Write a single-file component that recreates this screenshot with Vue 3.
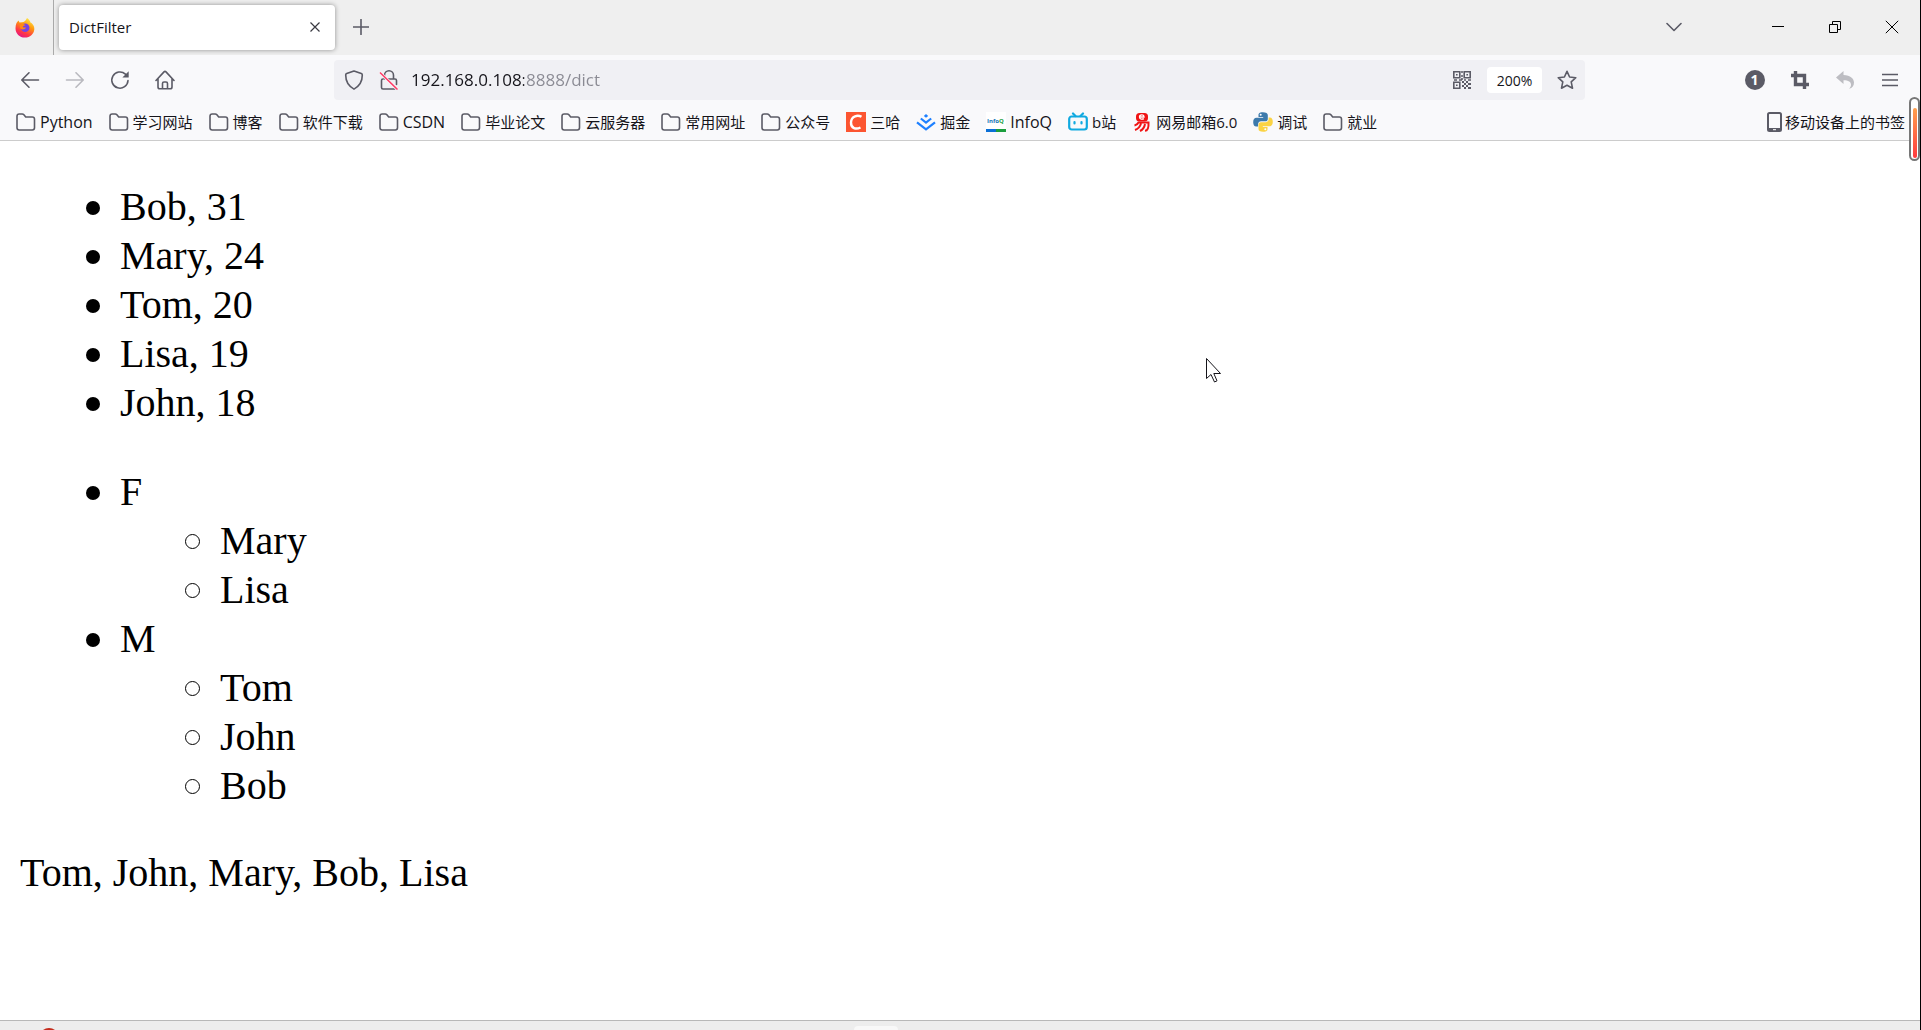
<script setup>
import { ref } from 'vue'

const address = ref('192.168.0.108:8888/dict')

const bookmarks = [
  { label: 'Python', icon: 'folder', latin: true },
  { label: '学习网站', icon: 'folder' },
  { label: '博客', icon: 'folder' },
  { label: '软件下载', icon: 'folder' },
  { label: 'CSDN', icon: 'folder', latin: true },
  { label: '毕业论文', icon: 'folder' },
  { label: '云服务器', icon: 'folder' },
  { label: '常用网址', icon: 'folder' },
  { label: '公众号', icon: 'folder' },
  { label: '三哈', icon: 'sanha' },
  { label: '掘金', icon: 'juejin' },
  { label: 'InfoQ', icon: 'infoq', latin: true },
  { label: 'b站', icon: 'bili' },
  { label: '网易邮箱6.0', icon: 'netease' },
  { label: '调试', icon: 'python' },
  { label: '就业', icon: 'folder' },
]

const people = ['Bob, 31', 'Mary, 24', 'Tom, 20', 'Lisa, 19', 'John, 18']
const groups = [
  { name: 'F', members: ['Mary', 'Lisa'] },
  { name: 'M', members: ['Tom', 'John', 'Bob'] },
]
</script>

<template>
  <div class="window">
    <header class="tabbar">
      <div class="brand">
        <svg width="20" height="20" viewBox="0 0 20 20">
          <defs>
            <linearGradient id="fox" x1="0.8" y1="0" x2="0.3" y2="1">
              <stop offset="0" stop-color="#fff44f" />
              <stop offset="0.4" stop-color="#ff980e" />
              <stop offset="0.75" stop-color="#ff3647" />
              <stop offset="1" stop-color="#e31587" />
            </linearGradient>
          </defs>
          <path d="M1.5 5 3.4 2.6 4.6 4.6 7 4.2C9 4 10.6 3 12 0c2 1.300 3.200 3 3.400 4.400 1 .3 1.800 1 2.200 1.800C19 8 19.500 9.500 19.300 11.500 18.800 16 15 19.600 10 19.600 4.500 19.600.5 15.500.5 10.200.5 8.200.8 6.500 1.500 5z" fill="url(#fox)" />
          <circle cx="10.200" cy="9.800" r="4.300" fill="#7542e5" />
          <path d="M5 6.500c2-1 4-.8 5.500.8-1 .2-2.300.7-2.800 1.600 1 .8 2 .8 3.300.4-.6 2-3 2.800-5 1.800C5 10 4.500 8 5 6.500z" fill="#ff8a16" />
        </svg>
      </div>
      <div class="tab">
        <span class="tab-title">DictFilter</span>
        <button class="tab-close" aria-label="Close tab">
          <svg width="10" height="10" viewBox="0 0 10 10"><path d="M.5.5l9 9M9.500.5l-9 9" class="dark" /></svg>
        </button>
      </div>
      <button class="new-tab" aria-label="New tab">
        <svg width="16" height="16" viewBox="0 0 16 16"><path d="M8 .5v15M.5 8h15" class="line" /></svg>
      </button>
      <div class="grow"></div>
      <button class="list-tabs" aria-label="List all tabs">
        <svg width="16" height="10" viewBox="0 0 16 10"><path d="M1 1.500l7 7 7-7" class="line" /></svg>
      </button>
      <button class="win-btn" aria-label="Minimize">
        <svg width="12" height="12" viewBox="0 0 12 12"><path d="M0 5.500h12" class="black" /></svg>
      </button>
      <button class="win-btn" aria-label="Restore">
        <svg width="12" height="12" viewBox="0 0 12 12"><path d="M.5 3.500h8v8h-8zM3.500 3.500v-3h8v8h-3" class="black" /></svg>
      </button>
      <button class="win-btn" aria-label="Close">
        <svg width="14" height="14" viewBox="0 0 14 14"><path d="M.8.8l12.400 12.400M13.200.8L.8 13.200" class="black" /></svg>
      </button>
    </header>

    <nav class="toolbar">
      <button class="tool" aria-label="Back">
        <svg width="20" height="20" viewBox="0 0 20 20"><path d="M18.500 10H2M9 2.800L1.800 10 9 17.200" class="line" /></svg>
      </button>
      <button class="tool faded" aria-label="Forward">
        <svg width="20" height="20" viewBox="0 0 20 20"><path d="M1.500 10H18M11 2.800L18.200 10 11 17.200" class="line" /></svg>
      </button>
      <button class="tool" aria-label="Reload">
        <svg width="20" height="20" viewBox="0 0 20 20">
          <path d="M18 10.500A8.100 8.100 0 1 1 15.400 4.100L17 5.600" class="line" />
          <path d="M18.700 1.200v6.300h-6.300z" fill="#5b5b66" />
        </svg>
      </button>
      <button class="tool" aria-label="Home">
        <svg width="20" height="20" viewBox="0 0 20 20"><path d="M1 10.500L9 1.900q1-1 2 0l8 8.600M3 8.800V17q0 1.800 1.800 1.800h10.400Q17 18.800 17 17V8.800M7.500 18.800V13.500q0-1.500 1.500-1.500h2q1.500 0 1.500 1.500v5.300" class="line" /></svg>
      </button>
      <div class="spacer"></div>
      <div class="urlbar">
        <svg width="20" height="20" viewBox="0 0 20 20"><path d="M10 1l7.300 2.600q1 .4 1 1.500C18.300 12 15 16.500 10 19.100 5 16.500 1.700 12 1.700 5.100q0-1.100 1-1.500z" class="line" /></svg>
        <svg class="lock" width="20" height="20" viewBox="0 0 20 20">
          <path d="M5.500 9V5.300a4.500 4.500 0 0 1 9 0V9M9.500 9H16q1.500 0 1.500 1.500v4M4 9q-1.500 0-1.500 1.500v7Q2.500 19 4 19h12" class="line" />
          <path d="M1 2.500L18.500 19.500" stroke="#f9f9fb" stroke-width="3" />
          <path d="M1 2.500L18.500 19.500" stroke="#ff3b67" stroke-width="1.600" />
        </svg>
        <input v-model="address" class="address" aria-label="Address" spellcheck="false" />
        <svg class="qr" width="18" height="18" viewBox="0 0 18 18" fill="none" stroke="#5b5b66" stroke-width="1.600">
          <path d="M.8.8h6v6h-6zM11.200.8h6v6h-6zM.8 11.200h6v6h-6z" />
          <path d="M3 3.800h1.600M13.400 3.800H15M3 14.200h1.600M8 1h2M8 5h2M9 7v2M1 9h3M6 9h3M11 9h2M15 9h3" />
          <path d="M9 11h2M13 11h2M11 13h2M15 13h3M9 15h2M13 15h2M11 17h2M15 17h3" stroke-width="2" />
        </svg>
        <button class="zoom">200%</button>
        <button class="star" aria-label="Bookmark this page">
          <svg width="20" height="20" viewBox="0 0 20 20"><path d="M10 1.300l2.600 5.700 6.200.7-4.600 4.200 1.300 6.300L10 15.300l-5.500 2.900 1.300-6.300L1.200 7.700 7.400 7z" class="line" /></svg>
        </button>
      </div>
      <div class="spacer"></div>
      <button class="tool" aria-label="Account"><span class="count">1</span></button>
      <button class="tool" aria-label="Screenshot">
        <svg width="18" height="18" viewBox="0 0 18 18"><path d="M4.500 0v13.500H18M0 4.500h13.500V18" fill="none" stroke="#5b5b66" stroke-width="3.400" /></svg>
      </button>
      <button class="tool" aria-label="Undo">
        <svg width="18" height="18" viewBox="0 0 18 18"><path d="M0 6.500L7.500 0v4C14.500 4 18 8 18 11.500c0 3-1.500 5.500-5 6.300 1.500-1.300 2-2.500 2-4 0-2.800-2.500-4.500-7.500-4.500V13z" fill="#bdbdc2" /></svg>
      </button>
      <button class="tool" aria-label="Menu">
        <svg width="16" height="14" viewBox="0 0 16 14"><path d="M0 1.500h16M0 7h16M0 12.500h16" class="line" /></svg>
      </button>
    </nav>

    <div class="bookmarks">
      <a v-for="b in bookmarks" :key="b.label" href="#" class="bookmark" :class="{ latin: b.latin }">
        <svg v-if="b.icon === 'folder'" width="20" height="20" viewBox="0 0 20 20"><path d="M1 15.800V4.200Q1 2 3.200 2h3q1 0 1.700.8L9.700 5h6.600q2.200 0 2.200 2.200v8.600q0 2.200-2.200 2.200H3.200Q1 18 1 15.800z" class="line" /></svg>
        <svg v-else-if="b.icon === 'sanha'" width="20" height="20" viewBox="0 0 20 20">
          <rect width="20" height="20" fill="#fc5531" />
          <path d="M15.500 4.800C12 2.800 5.300 3.500 5 10.500c-.2 6 5 7.200 9.500 5" fill="none" stroke="#fff" stroke-width="2.400" />
        </svg>
        <svg v-else-if="b.icon === 'juejin'" width="20" height="20" viewBox="0 0 20 20">
          <path d="M10 2l2.200 1.900L10 5.700 7.800 3.900z" fill="#1e80ff" />
          <path d="M4.800 6.500L10 10.700l5.200-4.200M1 10.300l9 7 9-7" fill="none" stroke="#1e80ff" stroke-width="2.200" />
        </svg>
        <svg v-else-if="b.icon === 'infoq'" width="20" height="20" viewBox="0 0 20 20">
          <rect width="20" height="20" fill="#fff" />
          <path d="M0 17h10v3H0z" fill="#0a6fd6" />
          <path d="M10 17h10v3H10z" fill="#1b9e3e" />
          <text x="1" y="11" font-size="6" font-weight="700" fill="#1673b8">Info<tspan fill="#1b9e3e">Q</tspan></text>
        </svg>
        <svg v-else-if="b.icon === 'bili'" width="20" height="20" viewBox="0 0 20 20" fill="none" stroke="#10a9e0" stroke-width="2.200" stroke-linecap="round">
          <rect x="1.200" y="4.500" width="17.600" height="13" rx="2.500" />
          <path d="M5 1.500L7.500 4M15 1.500L12.500 4M6.500 10v1.500M13.500 10v1.500" />
        </svg>
        <svg v-else-if="b.icon === 'netease'" width="20" height="20" viewBox="0 0 20 20" fill="none" stroke="#f01414" stroke-width="2">
          <rect x="4" y="1" width="12" height="8.500" rx="3.500" fill="#f01414" stroke="none" />
          <path d="M7.500 5h4.500c0-3-4.500-2.600-4.500 0s3 2.500 4.300 1.600" stroke="#fff" stroke-width="1.300" />
          <path d="M2.500 13.500C5 13 6 11.500 6.500 10.500H16.500q.5 8-3.500 8.300M3 18c3-1 5-3 6-6.500M8 19c3-1.500 4.500-4 5-7" />
        </svg>
        <svg v-else width="20" height="20" viewBox="0 0 20 20">
          <path d="M9.800.2C6 .2 5.500 1.800 5.500 3v2h4.700v.8H3.500C1.300 5.800.2 7.500.2 10.200s1.200 4.300 3 4.300h1.900v-2.300c0-1.700 1.300-2.900 3-2.900h4.300c1.400 0 2.400-1 2.400-2.400V3c0-1.700-1.700-2.800-5-2.800z" fill="#3d7aab" />
          <path d="M10.200 19.800c3.800 0 4.300-1.600 4.300-2.800v-2H9.800v-.8h6.700c2.200 0 3.300-1.700 3.300-4.400s-1.200-4.300-3-4.300h-1.200v1.800c0 1.700-1.300 2.900-3 2.900H7.900c-1.400 0-2.400 1-2.400 2.400V17c0 1.700 1.400 2.800 4.700 2.800z" fill="#fbd343" />
          <circle cx="7.700" cy="2.700" r="1" fill="#fff" />
          <circle cx="12.300" cy="17.300" r="1" fill="#fff" />
        </svg>
        <span>{{ b.label }}</span>
      </a>
      <div class="grow"></div>
      <a href="#" class="bookmark mobile">
        <svg width="15" height="20" viewBox="0 0 15 20">
          <rect x="1" y="1" width="13" height="18" rx="1.500" fill="none" stroke="#5b5b66" stroke-width="2" />
          <path d="M1 16h13v3H1z" fill="#5b5b66" />
          <path d="M6 17.700h3" stroke="#fff" />
        </svg>
        <span>移动设备上的书签</span>
      </a>
    </div>

    <main class="page">
      <ul class="list">
        <li v-for="p in people" :key="p">{{ p }}</li>
      </ul>
      <ul class="list">
        <li v-for="g in groups" :key="g.name">
          {{ g.name }}
          <ul class="sublist">
            <li v-for="m in g.members" :key="m">{{ m }}</li>
          </ul>
        </li>
      </ul>
      <p class="names">Tom, John, Mary, Bob, Lisa</p>
    </main>

    <footer class="taskbar">
      <span class="task-dot"></span>
      <span class="task-tile"></span>
    </footer>

    <div class="meter"><span class="meter-fill"></span></div>
    <svg class="cursor" width="16" height="25" viewBox="0 0 16 25"><path d="M.5.5v20l4.500-4 3.500 7.500 2.500-1.200L7.800 15.500h6.700z" fill="#fff" stroke="#15141a" /></svg>
  </div>
</template>

<style>
body {
  margin: 0;
}
</style>

<style scoped>
.window {
  position: relative;
  box-sizing: border-box;
  display: flex;
  flex-direction: column;
  min-height: 100vh;
  border-right: 1px solid #000;
  background: #fff;
  color: #15141a;
  font-family: "Open Sans", "Noto Sans CJK SC", sans-serif;
  overflow: hidden;
}
button {
  display: flex;
  align-items: center;
  justify-content: center;
  padding: 0;
  border: 0;
  background: none;
  color: inherit;
  font-family: inherit;
}
svg {
  flex: none;
}
.line {
  fill: none;
  stroke: #5b5b66;
  stroke-width: 1.600;
  stroke-linejoin: round;
  stroke-linecap: round;
}
.dark {
  fill: none;
  stroke: #3a3a42;
  stroke-width: 1.200;
}
.black {
  fill: none;
  stroke: #000;
}
.grow {
  flex: 1;
}
.tabbar {
  display: flex;
  height: 55px;
  background: #efefef;
}
.tabbar button {
  padding-bottom: 1px;
}
.brand {
  display: flex;
  align-items: center;
  width: 38px;
  padding-left: 15px;
  border-right: 1px solid #aaa;
}
.tab {
  display: flex;
  align-items: center;
  justify-content: space-between;
  box-sizing: border-box;
  width: 276px;
  margin: 5px;
  padding: 0 10px 1px;
  border-radius: 4px;
  background: #fff;
  box-shadow: 0 0 5px rgba(0, 0, 0, 0.4);
}
.tab-title {
  font-size: 15px;
  line-height: 20px;
}
.tab-close {
  width: 20px;
  height: 20px;
}
.new-tab {
  width: 42px;
}
.list-tabs {
  width: 45px;
  margin-right: 53px;
}
.win-btn {
  width: 57px;
}
.toolbar {
  display: flex;
  padding: 5px 8px 5px 7px;
  background: #f9f9fb;
}
.tool {
  width: 45px;
  height: 40px;
}
.faded {
  opacity: 0.4;
}
.spacer {
  flex: 1;
  max-width: 147px;
}
.urlbar {
  display: flex;
  flex: 4;
  align-items: center;
  box-sizing: border-box;
  height: 40px;
  padding: 0 8px 0 10px;
  border-radius: 4px;
  background: #f0f0f4;
}
.lock {
  margin: 0 12px 0 15px;
}
.address {
  flex: 1;
  min-width: 0;
  padding: 0;
  border: 0;
  outline: 0;
  background: linear-gradient(90deg, #15141a 113px, #8a8a93 113px);
  background-clip: text;
  -webkit-background-clip: text;
  -webkit-text-fill-color: transparent;
  font-family: inherit;
  font-size: 17px;
  line-height: 24px;
}
.zoom {
  width: 55px;
  height: 26px;
  margin: 0 15px 0 16px;
  border-radius: 4px;
  background: #fff;
  font-size: 14px;
}
.count {
  width: 20px;
  border-radius: 10px;
  background: #5b5b66;
  color: #fff;
  font-size: 14px;
  font-weight: 700;
  line-height: 20px;
  text-align: center;
}
.bookmarks {
  display: flex;
  align-items: center;
  gap: 16px;
  height: 33px;
  padding: 0 15px 2px 16px;
  border-bottom: 1px solid #ccc;
  background: #f9f9fb;
}
.bookmark {
  display: flex;
  align-items: center;
  gap: 4px;
  color: #15141a;
  font-size: 15px;
  line-height: 20px;
  text-decoration: none;
  white-space: nowrap;
}
.latin {
  font-size: 16px;
}
.mobile {
  gap: 3px;
}
.page {
  flex: 1;
  padding: 1px 20px 0;
  color: #000;
  font-family: "Liberation Serif", serif;
  font-size: 40px;
  line-height: 49px;
}
.list {
  margin: 40px 0;
  padding-left: 100px;
  list-style: none;
}
.sublist {
  margin: 0;
  padding-left: 100px;
  list-style: none;
}
.list li::before {
  content: "";
  display: inline-block;
  box-sizing: border-box;
  width: 14px;
  height: 14px;
  margin: 0 20px 0 -34px;
  border-radius: 50%;
  background: #000;
  vertical-align: 5px;
}
.sublist li::before {
  width: 15px;
  height: 15px;
  margin-left: -35px;
  border: 1px solid #000;
  background: none;
}
.names {
  margin: 40px 0;
  line-height: 46px;
}
.taskbar {
  display: flex;
  height: 9px;
  border-top: 1px solid #b8b8b8;
  background: #ededed;
  overflow: hidden;
}
.task-dot {
  flex: none;
  width: 20px;
  height: 20px;
  margin: 7px 0 0 39px;
  border-radius: 50%;
  background: #c42b1c;
}
.task-tile {
  flex: none;
  width: 44px;
  height: 20px;
  margin: 5px auto 0 795px;
  border-radius: 4px;
  background: #f8f8f8;
}
.meter {
  position: absolute;
  top: 97px;
  right: 0;
  box-sizing: border-box;
  width: 11px;
  height: 64px;
  padding: 9px 1px 1px 2px;
  border: 2px solid #777;
  border-radius: 6px;
  background: #fff;
}
.meter-fill {
  display: block;
  width: 4px;
  height: 50px;
  border-radius: 2px;
  background: linear-gradient(#ffa04d, #ff3b3f);
}
.cursor {
  position: absolute;
  top: 358px;
  left: 1206px;
}
</style>
